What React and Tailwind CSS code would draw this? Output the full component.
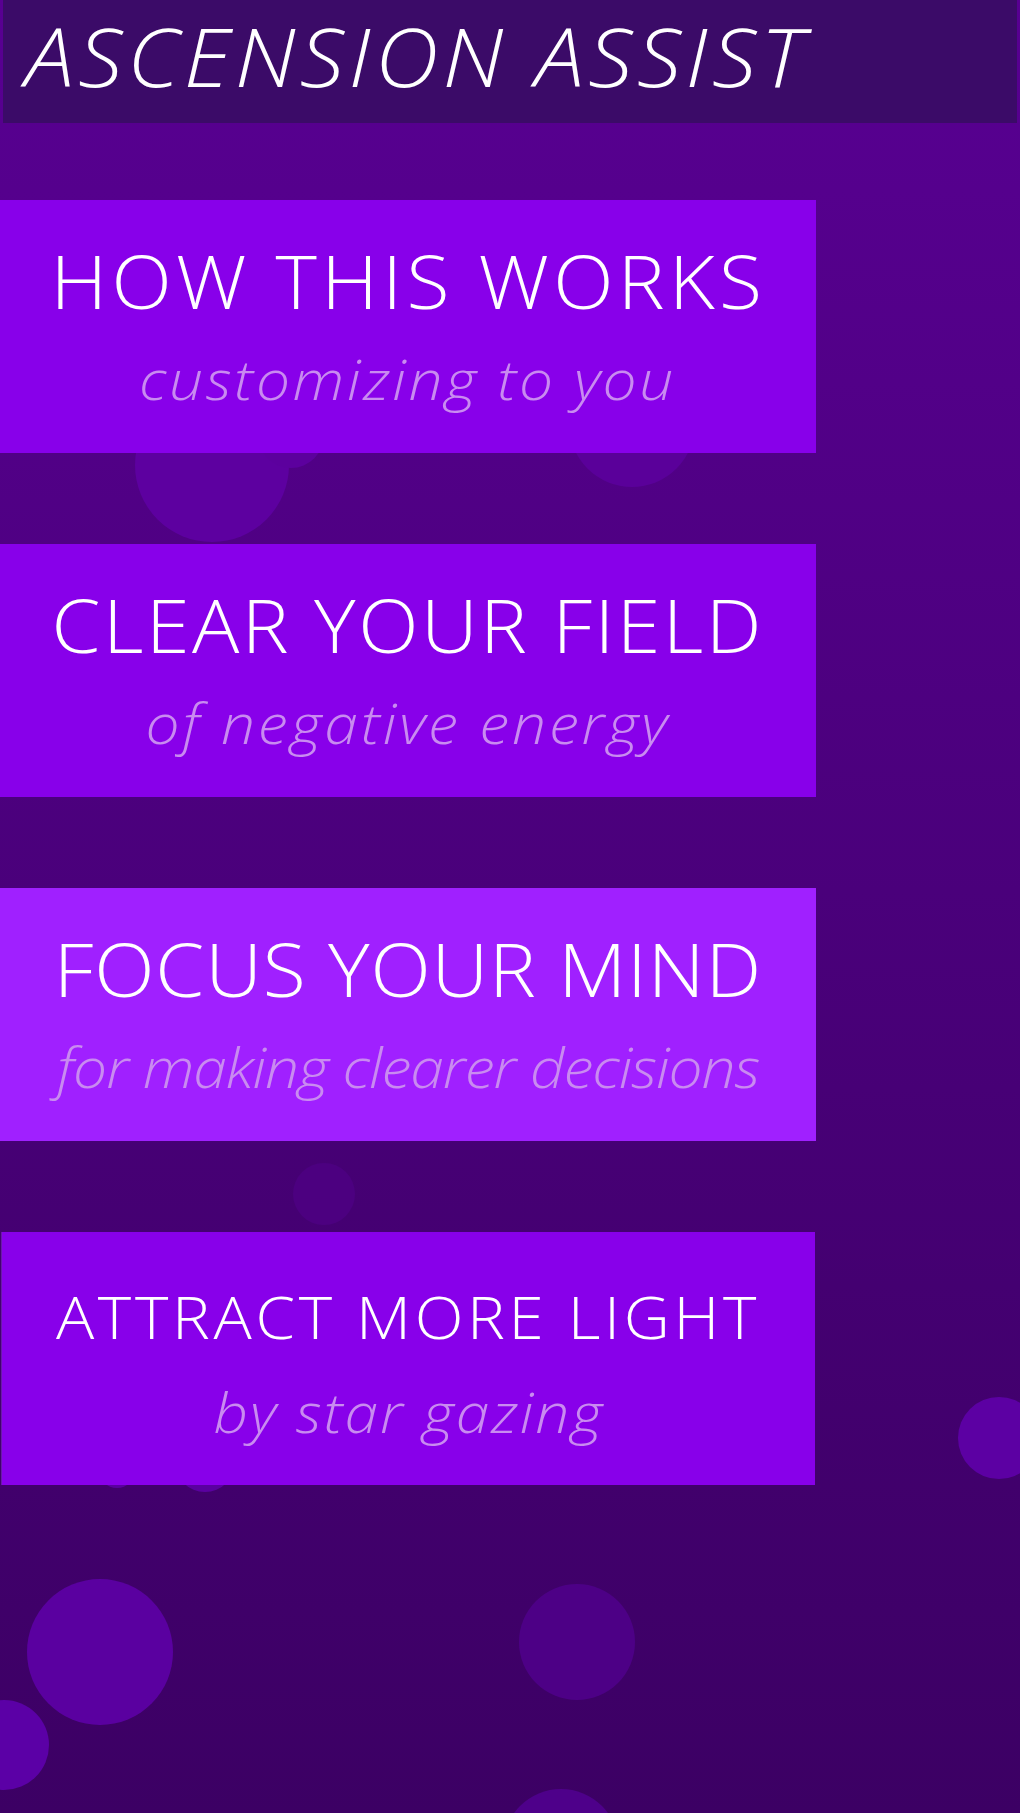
import React from "react";

const circles = [
  { x: 212, y: 465, r: 77, c: "bg-[#5d00a0]" },
  { x: 632, y: 424, r: 63, c: "bg-[#5a009a]" },
  { x: 291, y: 435, r: 33, c: "bg-[#5c009e]" },
  { x: 324, y: 1194, r: 31, c: "bg-[#4c0080]" },
  { x: 999, y: 1438, r: 41, c: "bg-[#5c00a3]" },
  { x: 117, y: 1470, r: 18, c: "bg-[#5a00a0]" },
  { x: 205, y: 1462, r: 30, c: "bg-[#5a00a0]" },
  { x: 100, y: 1652, r: 73, c: "bg-[#5a00a0]" },
  { x: 577, y: 1642, r: 58, c: "bg-[#4d0086]" },
  { x: 4, y: 1745, r: 45, c: "bg-[#5b00a6]" },
  { x: 561, y: 1847, r: 58, c: "bg-[#4e008a]" },
];

const cards = [
  {
    title: "HOW THIS WORKS",
    sub: "customizing to you",
    box: "w-[816px] bg-[#8800ea] pt-[44px]",
    t: "text-[73px] tracking-[4px]",
    s: "mt-[33px] tracking-[2.4px]",
  },
  {
    title: "CLEAR YOUR FIELD",
    sub: "of negative energy",
    box: "w-[816px] bg-[#8800ea] pt-[44px]",
    t: "text-[73px] tracking-[2.3px]",
    s: "mt-[33px] tracking-[2.6px]",
  },
  {
    title: "FOCUS YOUR MIND",
    sub: "for making clearer decisions",
    box: "w-[816px] bg-[#a020ff] pt-[44px]",
    t: "text-[73px] tracking-[0.8px]",
    s: "mt-[33px] tracking-[-1px]",
  },
  {
    title: "ATTRACT MORE LIGHT",
    sub: "by star gazing",
    box: "ml-[1px] w-[814px] border-l border-[#6a1aa8] bg-[#8800ea] pt-[55px]",
    t: "text-[59px] tracking-[3.4px]",
    s: "mt-[37px] tracking-[1.8px]",
  },
];

export default function App() {
  return (
    <div className="relative h-[1813px] w-[1020px] overflow-hidden bg-gradient-to-b from-[#580092] to-[#3c0064] font-['Open_Sans',sans-serif]">
      {circles.map((c, i) => (
        <div
          key={i}
          className={`absolute rounded-full ${c.c}`}
          style={{ left: c.x - c.r, top: c.y - c.r, width: c.r * 2, height: c.r * 2 }}
        />
      ))}
      <div className="relative flex flex-col">
        <header className="mx-[3px] h-[123px] bg-[#3b0b68] px-[22px] pt-[14px]">
          <h1 className="origin-left scale-x-[1.08] whitespace-nowrap text-[82px] font-light italic leading-none tracking-[4px] text-white">
            ASCENSION ASSIST
          </h1>
        </header>
        <div className="mt-[77px] flex flex-col gap-[91px]">
          {cards.map((card) => (
            <div key={card.title} className={`flex h-[253px] flex-col items-center ${card.box}`}>
              <div className={`scale-x-[1.08] whitespace-nowrap font-light leading-none text-white ${card.t}`}>
                {card.title}
              </div>
              <div
                className={`scale-x-[1.08] whitespace-nowrap text-[56px] font-light italic leading-none text-[#c98bf0] ${card.s}`}
              >
                {card.sub}
              </div>
            </div>
          ))}
        </div>
      </div>
    </div>
  );
}
